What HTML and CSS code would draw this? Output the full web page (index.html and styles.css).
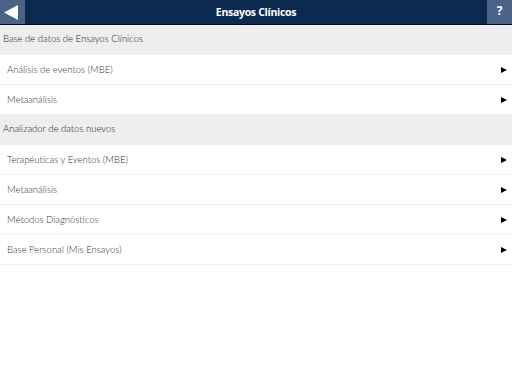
FILE: index.html
```html
<!DOCTYPE html>
<html lang="es">
<head>
    <meta charset="UTF-8">
    <meta name="viewport" content="width=device-width, initial-scale=1.0">
    <title>Ensayos Clínicos</title>
    <link rel="stylesheet" href="styles.css">
</head>
<body>
    <div class="topbar">
        <button class="bar-btn btn-back">
            <svg width="15" height="15" viewBox="0 0 15 15"><polygon points="14,0 14,15 0,7.5" fill="#fff"/></svg>
        </button>
        <div class="title">Ensayos Clínicos</div>
        <button class="bar-btn btn-help">?</button>
    </div>

    <div class="section">Base de datos de Ensayos Clínicos</div>
    <div class="row"><span>Análisis de eventos (MBE)</span><span class="arrow"></span></div>
    <div class="row"><span>Metaanálisis</span><span class="arrow"></span></div>

    <div class="section">Analizador de datos nuevos</div>
    <div class="row"><span>Terapéuticas y Eventos (MBE)</span><span class="arrow"></span></div>
    <div class="row"><span>Metaanálisis</span><span class="arrow"></span></div>
    <div class="row"><span>Métodos Diagnósticos</span><span class="arrow"></span></div>
    <div class="row"><span>Base Personal (Mis Ensayos)</span><span class="arrow"></span></div>
</body>
</html>
```

FILE: styles.css
```css
body {
    margin: 0;
    background: #fff;
    font-family: Lato, "Open Sans", sans-serif;
}
.topbar {
    display: flex;
    height: 24px;
    background: #0c2a4e;
    border-bottom: 1px solid #030b2c;
}
.bar-btn {
    width: 25px;
    border: none;
    padding: 0;
    background: #4a6285;
    color: #fff;
    display: flex;
    align-items: center;
    justify-content: center;
}
.btn-back {
    padding-right: 2px;
}
.btn-help {
    font-family: "Open Sans", sans-serif;
    font-weight: 700;
    font-size: 12px;
    padding-bottom: 3px;
}
.title {
    flex: 1;
    text-align: center;
    color: #fff;
    font-family: "Open Sans", sans-serif;
    font-weight: 700;
    font-size: 10.5px;
    line-height: 24px;
    letter-spacing: -0.3px;
    padding-bottom: 3px;
}
.section {
    height: 30px;
    background: #eeeeee;
    color: #222;
    font-size: 9.5px;
    font-weight: 300;
    padding: 0 0 4px 3px;
    box-sizing: border-box;
    display: flex;
    align-items: center;
}
.row {
    height: 30px;
    box-sizing: border-box;
    border-bottom: 1px solid #f1f1f1;
    display: flex;
    align-items: center;
    justify-content: space-between;
    padding: 0 5px 0 7px;
    color: #333;
    font-size: 9.5px;
    font-weight: 300;
}
.arrow {
    width: 0;
    height: 0;
    border-top: 3.5px solid transparent;
    border-bottom: 3.5px solid transparent;
    border-left: 6px solid #000;
}
```
